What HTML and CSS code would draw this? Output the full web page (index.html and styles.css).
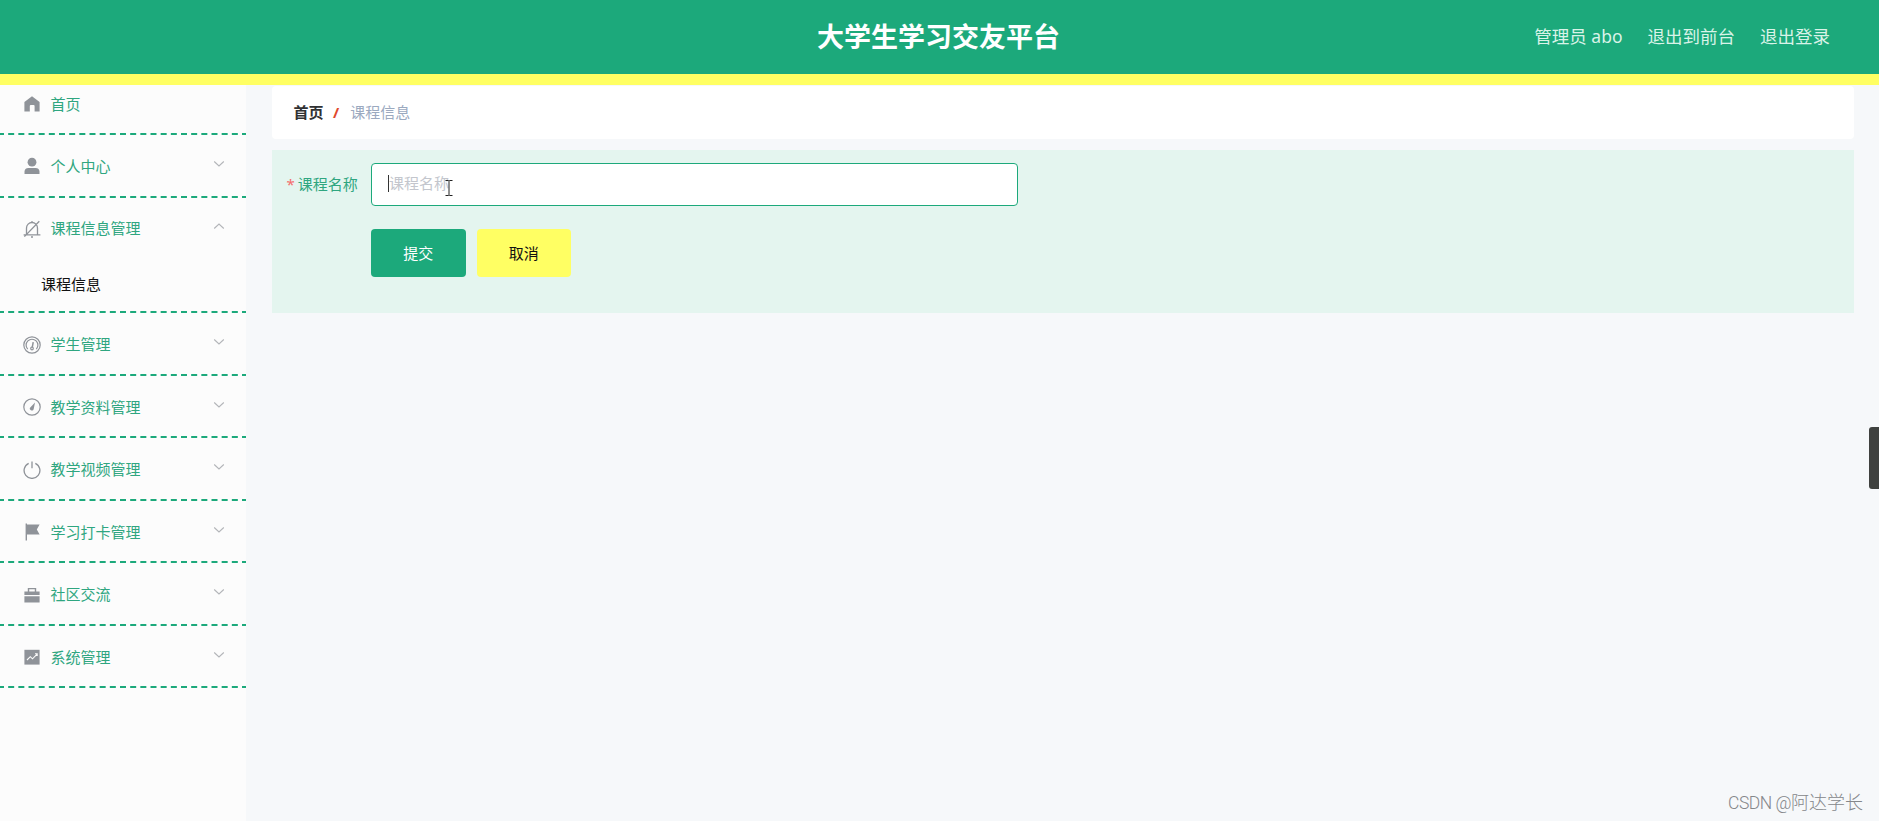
FILE: index.html
```html
<!DOCTYPE html>
<html lang="zh-CN">
<head>
  <meta charset="UTF-8">
  <title>大学生学习交友平台</title>
  <meta name="viewport" content="width=device-width, initial-scale=1.0">
  <link rel="stylesheet" href="styles.css">
</head>
<body>
  <!-- shared arrow shape -->
  <svg class="defs" width="0" height="0">
    <symbol id="arrow" viewBox="0 0 12 8"><path d="M1.2 1.5 6 6l4.8-4.5" fill="none" stroke="currentColor" stroke-width="1.1"/></symbol>
  </svg>

  <!-- Header -->
  <header class="header">
    <h1 class="title">大学生学习交友平台</h1>
    <nav class="user-nav">
      <span>管理员 abo</span>
      <a>退出到前台</a>
      <a>退出登录</a>
    </nav>
  </header>

  <div class="container">
    <!-- Sidebar -->
    <aside class="sidebar">
      <ul class="menu">
        <li class="menu-home">
          <div class="menu-title">
            <svg class="icon" viewBox="0 0 18 18"><path d="M9 1.2 16.6 7v9.600h-5V11a1 1 0 0 0-1-1H7.800a1 1 0 0 0-1 1v5.600H1.400V7z" fill="currentColor"/></svg>
            <span>首页</span>
          </div>
        </li>
        <li>
          <div class="menu-title">
            <svg class="icon" viewBox="0 0 18 18"><circle cx="9" cy="5.200" r="4.400" fill="currentColor"/><path d="M1.500 17v-2.200Q1.500 11 5.500 11h7q4 0 4 3.800V17z" fill="currentColor"/></svg>
            <span>个人中心</span>
            <svg class="arrow"><use href="#arrow"/></svg>
          </div>
        </li>
        <li class="opened">
          <div class="menu-title">
            <svg class="icon" viewBox="0 0 18 18"><path d="M3.500 14.500V8a5.500 5.500 0 0 1 11 0v6.500M.6 14.900h16.800M9 2.500V1M8 17h2M16.300 1.300 1.400 16.600" fill="none" stroke="currentColor" stroke-width="1.3"/></svg>
            <span>课程信息管理</span>
            <svg class="arrow"><use href="#arrow"/></svg>
          </div>
          <div class="submenu">课程信息</div>
        </li>
        <li>
          <div class="menu-title">
            <svg class="icon" viewBox="0 0 18 18"><g fill="none" stroke="currentColor" stroke-width="1.200"><circle cx="9" cy="9" r="8.200"/><path d="M4.700 13.200a5.900 5.900 0 1 1 8.600 0"/><circle cx="9" cy="12.500" r="1.300"/><path d="m9.300 11.200.9-5" stroke-width="1.500"/></g></svg>
            <span>学生管理</span>
            <svg class="arrow"><use href="#arrow"/></svg>
          </div>
        </li>
        <li>
          <div class="menu-title">
            <svg class="icon" viewBox="0 0 18 18"><circle cx="9" cy="9" r="8.200" fill="none" stroke="currentColor" stroke-width="1.200"/><path d="M12 4.600 10.700 11a1.900 1.900 0 1 1-3.200-1.800z" fill="currentColor"/></svg>
            <span>教学资料管理</span>
            <svg class="arrow"><use href="#arrow"/></svg>
          </div>
        </li>
        <li>
          <div class="menu-title">
            <svg class="icon" viewBox="0 0 18 18"><path d="M5.700 2.300a7.900 7.900 0 1 0 6.600 0M9 .5v6.700" fill="none" stroke="currentColor" stroke-width="1.300"/></svg>
            <span>教学视频管理</span>
            <svg class="arrow"><use href="#arrow"/></svg>
          </div>
        </li>
        <li>
          <div class="menu-title">
            <svg class="icon" viewBox="0 0 18 18"><path d="M2.600.6H4v1h12.600l-2.800 5 2.800 5H4v5.800H2.600z" fill="currentColor"/></svg>
            <span>学习打卡管理</span>
            <svg class="arrow"><use href="#arrow"/></svg>
          </div>
        </li>
        <li>
          <div class="menu-title">
            <svg class="icon" viewBox="0 0 18 18"><path d="M1.400 9V5.500h3.400V2h8.400v3.500h3.400V9zM6.200 5.500h5.600V3.300H6.200zM1.400 10.200h15.200v6.400H1.400z" fill="currentColor" fill-rule="evenodd"/></svg>
            <span>社区交流</span>
            <svg class="arrow"><use href="#arrow"/></svg>
          </div>
        </li>
        <li>
          <div class="menu-title">
            <svg class="icon" viewBox="0 0 18 18"><path d="M1.400 1.800h15.200v14.800H1.400z" fill="currentColor"/><path d="m4 12 3.300-3.300 2.200 2.100 4.600-4.600M12 5.800h2.200V8" fill="none" stroke="#fcfcfc" stroke-width="1.100"/></svg>
            <span>系统管理</span>
            <svg class="arrow"><use href="#arrow"/></svg>
          </div>
        </li>
      </ul>
    </aside>

    <!-- Content -->
    <main class="main">
      <div class="breadcrumb">
        <b>首页</b>
        <span class="separator">/</span>
        <span class="current">课程信息</span>
      </div>

      <form class="form">
        <div class="form-item">
          <label><span class="required">*</span>课程名称</label>
          <div class="input">
            <span class="placeholder">课程名称</span>
            <svg class="ibeam" viewBox="0 0 8 16"><path d="M.5.500H3.500L4 1 4.500.500h3M.500 15.500h3L4 15l.5.500h3M4 1v14" fill="none" stroke="#222"/></svg>
          </div>
        </div>
        <div class="form-buttons">
          <button type="button" class="btn btn-submit">提交</button>
          <button type="button" class="btn btn-cancel">取消</button>
        </div>
      </form>
    </main>
  </div>

  <div class="side-handle"></div>
  <div class="watermark"><span>CSDN @</span>阿达学长</div>
</body>
</html>
```
FILE: styles.css
```css
/* ===== Base ===== */
* {
  margin: 0;
  padding: 0;
  box-sizing: border-box;
}
body {
  height: 821px;
  overflow: hidden;
  display: flex;
  flex-direction: column;
  background: #f6f8fa;
  font-family: "Noto Sans", "Noto Sans CJK SC", sans-serif;
  font-size: 15px;
}
.defs {
  position: absolute;
}

/* ===== Header ===== */
.header {
  flex: none;
  height: 85px;
  display: grid;
  grid-template-columns: 1fr auto 1fr;
  align-items: center;
  padding: 0 49px;
  background: #1ca97b;
  border-bottom: 11px solid #ffff63;
  color: #fff;
}
.title {
  grid-column: 2;
  font-size: 27px;
  line-height: 40px;
  margin-right: 2px;
}
.user-nav {
  display: flex;
  justify-content: flex-end;
  gap: 25px;
  padding-bottom: 3px;
  color: #d9f3e8;
  font-size: 17.5px;
}

.container {
  flex: 1;
  display: flex;
}

/* ===== Sidebar ===== */
.sidebar {
  width: 246px;
  background: #fcfcfc;
  overflow: hidden;
}
.menu {
  list-style: none;
  margin: 0 -2px;
}
.menu li {
  border-bottom: 2px dashed #1ca97b;
}
.menu-title {
  height: 60.5px;
  display: flex;
  align-items: center;
  padding: 0 23px 0 25px;
  color: #2fa680;
}
.menu-home .menu-title {
  height: 48px;
  padding-bottom: 12px;
}
.icon {
  width: 18px;
  height: 18px;
  margin-right: 9.5px;
  color: #8f9399;
  position: relative;
  top: 1px;
}
.arrow {
  width: 12px;
  height: 8px;
  margin: 0 0 3px auto;
  color: #b3b5b9;
}
.opened .arrow {
  transform: rotate(180deg);
}
.submenu {
  height: 53.4px;
  padding-left: 43px;
  line-height: 53px;
  color: #111;
}

/* ===== Main ===== */
.main {
  flex: 1;
  padding: 1px 25.5px 0;
}
.breadcrumb {
  height: 53px;
  display: flex;
  align-items: center;
  padding: 0 0 2px 22px;
  background: #fff;
  border-radius: 4px;
  color: #303133;
}
.separator {
  margin: 0 11px 0 9.5px;
  color: #e0482c;
  font-weight: bold;
}
.current {
  color: #9ba9bf;
}

/* ===== Form ===== */
.form {
  height: 163px;
  margin-top: 11px;
  padding: 12.5px 15px;
  background: #e4f5ef;
}
.form-item {
  display: flex;
  align-items: center;
  height: 43.5px;
}
.form-item label {
  width: 84.5px;
  padding-bottom: 2px;
  color: #2fa680;
}
.required {
  margin-right: 3px;
  color: #f56c6c;
}
.input {
  width: 647px;
  height: 43.5px;
  display: flex;
  align-items: center;
  padding: 0 0 1px 16px;
  background: #fff;
  border: 1px solid #1ca97b;
  border-radius: 4px;
}
.placeholder {
  border-left: 1px solid #333;
  line-height: 17px;
  color: #c3c6cd;
}
/* text cursor over the placeholder */
.ibeam {
  position: relative;
  left: -4px;
  top: 4px;
  width: 8px;
  height: 16px;
}
.form-buttons {
  display: flex;
  gap: 11px;
  margin: 23px 0 0 84.5px;
}
.btn {
  width: 94.5px;
  height: 48px;
  padding-bottom: 2px;
  border: none;
  border-radius: 4px;
  font: inherit;
}
.btn-submit {
  background: #1ca97b;
  color: #fff;
}
.btn-cancel {
  background: #ffff63;
  color: #111;
}

/* ===== Overlays ===== */
.side-handle {
  position: absolute;
  right: 0;
  top: 427px;
  width: 10px;
  height: 62px;
  background: #3f413f;
  border-radius: 3px 0 0 3px;
}
.watermark {
  position: absolute;
  right: 16px;
  bottom: 5px;
  color: #85878a;
  font: 300 18px/26px "Noto Sans CJK SC", sans-serif;
}
.watermark span {
  font-family: Roboto, sans-serif;
  font-size: 17.5px;
  letter-spacing: -0.5px;
}
```
